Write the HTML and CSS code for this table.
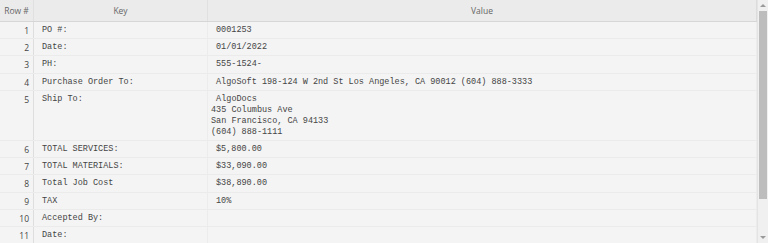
FILE: index.html
```html
<!DOCTYPE html>
<html>
<head>
<meta charset="utf-8">
<link rel="stylesheet" href="styles.css">
</head>
<body>
<div class="frame">
  <div class="grid">
    <div class="hrow">
      <div class="hc c-num">Row #</div>
      <div class="hc c-key">Key</div>
      <div class="hc c-val">Value</div>
    </div>
    <div class="row"><div class="c-num num">1</div><div class="c-key cell">PO #:</div><div class="c-val cell">0001253</div></div>
    <div class="row"><div class="c-num num">2</div><div class="c-key cell">Date:</div><div class="c-val cell">01/01/2022</div></div>
    <div class="row"><div class="c-num num">3</div><div class="c-key cell">PH:</div><div class="c-val cell">555-1524-</div></div>
    <div class="row"><div class="c-num num">4</div><div class="c-key cell">Purchase Order To:</div><div class="c-val cell">AlgoSoft 198-124 W 2nd St Los Angeles, CA 90012 (604) 888-3333</div></div>
    <div class="row"><div class="c-num num">5</div><div class="c-key cell">Ship To:</div><div class="c-val cell multi"> AlgoDocs
435 Columbus Ave
San Francisco, CA 94133
(604) 888-1111</div></div>
    <div class="row"><div class="c-num num">6</div><div class="c-key cell">TOTAL SERVICES:</div><div class="c-val cell">$5,800.00</div></div>
    <div class="row"><div class="c-num num">7</div><div class="c-key cell">TOTAL MATERIALS:</div><div class="c-val cell">$33,090.00</div></div>
    <div class="row"><div class="c-num num">8</div><div class="c-key cell">Total Job Cost</div><div class="c-val cell">$38,890.00</div></div>
    <div class="row"><div class="c-num num">9</div><div class="c-key cell">TAX</div><div class="c-val cell">10%</div></div>
    <div class="row"><div class="c-num num">10</div><div class="c-key cell">Accepted By:</div><div class="c-val cell"></div></div>
    <div class="row"><div class="c-num num">11</div><div class="c-key cell">Date:</div><div class="c-val cell"></div></div>
  </div>
  <div class="scrollbar">
    <div class="arrow up"></div>
    <div class="thumb"></div>
    <div class="arrow down"></div>
  </div>
</div>
</body>
</html>
```
FILE: styles.css
```css
html, body {
  margin: 0;
  padding: 0;
  background: #f4f4f4;
  overflow: hidden;
}
.frame {
  display: flex;
  width: 768px;
  height: 243px;
  overflow: hidden;
}
.grid {
  flex: 1;
  display: flex;
  flex-direction: column;
}
.hrow {
  display: flex;
  flex-shrink: 0;
  height: 22px;
  box-sizing: border-box;
  background: #ebebeb;
  border-bottom: 1px solid #d6d6d6;
  font-family: "Open Sans", "Liberation Sans", sans-serif;
  font-size: 8.5px;
  color: #666;
}
.hc {
  display: flex;
  align-items: center;
  justify-content: center;
  border-right: 1px solid #e0e0e0;
  box-sizing: border-box;
}
.hrow .c-val { border-right: 1px solid #dcdcdc; }
.c-num { width: 34px; flex: none; box-sizing: border-box; }
.c-key { width: 174px; flex: none; box-sizing: border-box; }
.c-val { flex: 1; box-sizing: border-box; }
.row {
  display: flex;
  flex-shrink: 0;
  border-bottom: 1px solid #ebebeb;
  font-family: "Liberation Mono", "DejaVu Sans Mono", monospace;
  font-size: 8.5px;
  line-height: 11px;
  color: #444;
}
.num {
  text-align: right;
  padding: 3px 4px 2.2px 0;
  border-right: 1px solid #dedede;
  font-family: "Open Sans", "Liberation Sans", sans-serif;
  font-size: 8.5px;
  color: #444;
}
.cell {
  padding: 3px 3px 2.2px 8px;
  border-right: 1px solid #ececec;
  white-space: nowrap;
}
.multi {
  white-space: pre;
  padding-left: 3px;
}
.scrollbar {
  width: 11px;
  flex: none;
  background: #f0f0f0;
  border-left: 1px solid #e4e4e4;
  display: flex;
  flex-direction: column;
  align-items: center;
  box-sizing: border-box;
}
.arrow {
  width: 0;
  height: 0;
  border-left: 3px solid transparent;
  border-right: 3px solid transparent;
  margin: 4px 0 4px;
}
.up { border-bottom: 3px solid #9a9a9a; }
.down { border-top: 3px solid #9a9a9a; margin-top: auto; }
.thumb {
  width: 8px;
  height: 188px;
  background: #bdbdbd;
}
```
